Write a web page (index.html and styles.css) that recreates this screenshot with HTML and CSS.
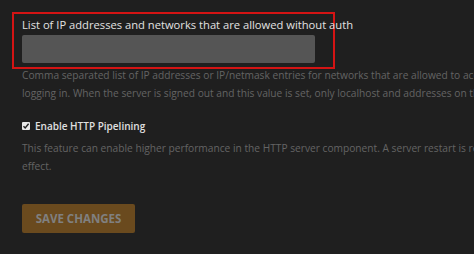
FILE: index.html
```html
<!DOCTYPE html>
<html>
<head>
<meta charset="utf-8">
<link rel="stylesheet" href="styles.css">
</head>
<body>
<div class="page">
  <div class="highlight">
    <label class="field-label">List of IP addresses and networks that are allowed without auth</label>
    <div class="input"></div>
  </div>
  <p class="help">Comma separated list of IP addresses or IP/netmask entries for networks that are allowed to access Plex Media Server without<br>logging in. When the server is signed out and this value is set, only localhost and addresses on this list will be allowed to access the server.</p>
  <div class="check-row">
    <span class="checkbox"><svg viewBox="0 0 8 8" width="8" height="8"><path d="M1.5 4.2 L3.2 6 L6.6 1.8" fill="none" stroke="#222" stroke-width="1.4"/></svg></span>
    <span class="check-label">Enable HTTP Pipelining</span>
  </div>
  <p class="help help-second">This feature can enable higher performance in the HTTP server component. A server restart is required for this change to take<br>effect.</p>
  <button class="save">SAVE CHANGES</button>
</div>
</body>
</html>
```

FILE: styles.css
```css
html, body {
  margin: 0;
  padding: 0;
  background: #1f1f1f;
  overflow: hidden;
}
.page {
  width: 474px;
  height: 254px;
  padding: 12px 0 0 12px;
  box-sizing: border-box;
  font-family: "Open Sans", sans-serif;
  overflow: hidden;
}
.highlight {
  width: 323px;
  height: 57px;
  box-sizing: border-box;
  border: 2px solid #d41414;
  padding: 3px 0 0 8px;
}
.field-label {
  display: block;
  color: #e2e2e2;
  font-size: 11.2px;
  line-height: 16px;
  height: 18px;
  white-space: nowrap;
}
.input {
  width: 293px;
  height: 28px;
  background: #555555;
  border-radius: 2px;
}
.help {
  margin: -3px 0 0 0;
  padding-left: 10px;
  width: 800px;
  color: #646464;
  font-size: 10.2px;
  line-height: 18px;
  white-space: nowrap;
}
.check-row {
  display: flex;
  align-items: center;
  gap: 5px;
  padding-left: 10px;
  margin-top: 15px;
  height: 18px;
}
.checkbox {
  width: 8px;
  height: 8px;
  background: #e8e8e8;
  border-radius: 1px;
  display: flex;
}
.check-label {
  color: #e0e0e0;
  font-size: 10px;
  font-weight: 600;
}
.help-second {
  margin-top: 4px;
}
.save {
  display: block;
  margin: 29px 0 0 10px;
  width: 113px;
  height: 29px;
  border: none;
  border-radius: 2px;
  background: #6a4a1e;
  color: #808080;
  font-family: "Open Sans", sans-serif;
  font-weight: 700;
  font-size: 11.5px;
  padding: 0;
}
```
